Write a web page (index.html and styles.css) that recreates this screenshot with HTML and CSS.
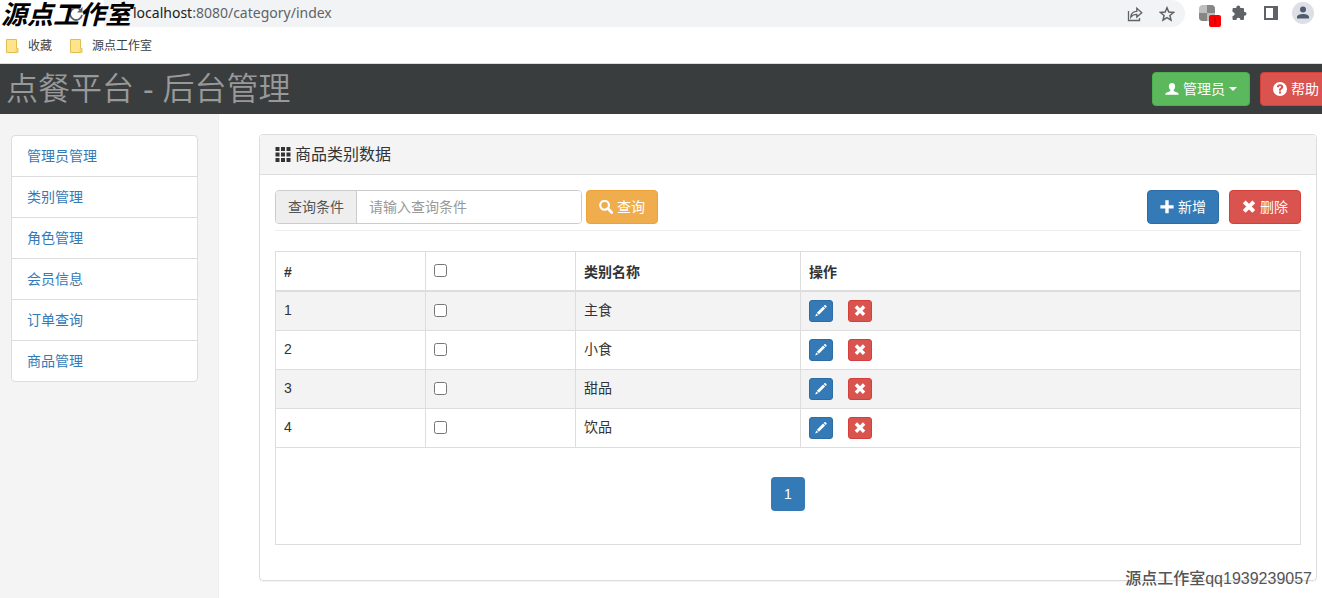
FILE: index.html
```html
<!DOCTYPE html>
<html lang="zh-CN">
<head>
<meta charset="utf-8">
<meta name="viewport" content="width=device-width, initial-scale=1">
<title>点餐平台 - 后台管理</title>
<link rel="stylesheet" href="styles.css">
</head>
<body>
<svg class="sprite" aria-hidden="true">
  <symbol id="i-user" viewBox="0 0 16 14"><path d="M8 0C10.300 0 11.700 1.700 11.600 4C11.500 5.700 10.900 7.200 9.900 8C9.700 8.800 9.900 9.400 10.500 9.700L14.500 11.300C15.300 11.600 15.600 12.200 15.600 13.500H.4C.4 12.200 .7 11.600 1.500 11.300L5.500 9.700C6.100 9.400 6.300 8.800 6.100 8C5.100 7.200 4.500 5.700 4.400 4C4.300 1.700 5.700 0 8 0Z"/></symbol>
  <symbol id="i-help" viewBox="0 0 14 14"><path fill-rule="evenodd" d="M7 0a7 7 0 1 1 0 14A7 7 0 0 1 7 0ZM6 9.600v2h2.100v-2ZM3.900 5.300h2.200c0-.8.300-1.200 1-1.200.6 0 .9.300.9.800 0 .5-.3.800-.9 1.200C6.300 6.700 6 7.300 6 8.800h2c0-.8.200-1.100.9-1.600.9-.6 1.300-1.300 1.300-2.400 0-1.600-1.200-2.600-3.100-2.600S3.900 3.400 3.900 5.300Z"/></symbol>
  <symbol id="i-grid" viewBox="0 0 16 16"><path d="M.5 0h4v4h-4zM6 0h4v4H6zM11.500 0h4v4h-4zM.5 5.500h4v4h-4zM6 5.500h4v4H6zM11.500 5.500h4v4h-4zM.5 11h4v4h-4zM6 11h4v4H6zM11.500 11h4v4h-4z"/></symbol>
  <symbol id="i-search" viewBox="0 0 14 14"><circle cx="5.600" cy="5.300" r="4.400" fill="none" stroke="currentColor" stroke-width="2.200"/><path d="M8.900 8.600l3.800 3.800" stroke="currentColor" stroke-width="2.800" stroke-linecap="round"/></symbol>
  <symbol id="i-plus" viewBox="0 0 14 14"><path d="M5.300.3h3.400v4.900h4.900v3.200H8.700v4.900H5.300V8.400H.4V5.200h4.900z"/></symbol>
  <symbol id="i-remove" viewBox="0 0 14 14"><path d="M3.600.4L7 3.800 10.400.4l2.800 2.800-3.400 3.400 3.400 3.400-2.800 2.800L7 9.400l-3.400 3.400L.8 10l3.400-3.400L.8 3.200z"/></symbol>
  <symbol id="i-pencil" viewBox="0 0 14 14"><path d="M.2 13.400l1.300-3.600 2.300 2.300zM2.200 9.100l7.300-7.300 2.300 2.300-7.300 7.300zM10.200 1.100l.8-.8c.4-.4.900-.4 1.300 0l1 1c.4.400.4.900 0 1.300l-.8.800z"/></symbol>
  <symbol id="i-folder" viewBox="0 0 13 14"><path d="M.5.500h10v9h1.500v4H.5z" fill="#ffe48a" stroke="#dfbf55"/><path d="M9.500 13.500v-3.500h2v3.500z" fill="#f6d365"/></symbol>
</svg>

<div class="browser">
  <div class="toolbar">
    <div class="address">
      <svg class="reload" viewBox="0 0 16 16" aria-hidden="true"><path class="outline" d="M13 4.500A6 6 0 1 0 14 9" stroke-width="1.800"/><path d="M14.500 1v5.500H9z"/></svg>
      <span class="url"><span class="host">localhost</span>:8080/category/index</span>
      <button class="tool" aria-label="分享"><svg class="outline" viewBox="0 0 16 16" stroke-width="1.300"><path d="M1.500 5v9.500h11V12M3.800 11c.3-3.800 2.500-5.600 6-5.700V2.300l5 4.500-5 4.300V8.300C7.300 8.300 5.300 9 3.800 11z"/></svg></button>
      <button class="tool" aria-label="加入收藏"><svg class="outline" viewBox="0 0 16 16" stroke-width="1.500"><path d="M8 1.800l1.800 4.300 4.700.4-3.600 3 1.100 4.600L8 11.700l-4 2.400 1.100-4.600-3.600-3 4.700-.4z"/></svg></button>
    </div>
    <div class="extensions">
      <button class="tool tool-wide" aria-label="扩展程序"><svg viewBox="0 0 24 24"><clipPath id="tile"><rect x="1" y="2" width="16" height="16" rx="4"/></clipPath><g clip-path="url(#tile)"><path fill="#bfbfbf" d="M1 2h16v16H1z"/><path fill="#868686" d="M9 2h8v8H9zM1 10h8v8H1z"/></g><rect x="11" y="12" width="12" height="12" rx="2" fill="#f00"/><path d="M17 14v5M17 20v1.500" stroke="#a00" stroke-width="1.200"/></svg></button>
      <button class="tool" aria-label="管理扩展"><svg viewBox="0 0 16 16"><path d="M1.500 4.200c0-.8.500-1.200 1.200-1.200h2.600c-.3-3.500 4.200-3.500 4 0h2.500c.8 0 1.200.5 1.200 1.200v2.600c3.300-.2 3.300 4.200 0 4v3c0 .8-.5 1.200-1.200 1.200H9.400c.1-3-4-3-4 0H2.700c-.7 0-1.200-.4-1.200-1.200v-2.900c2.900.1 2.900-4 0-4z"/></svg></button>
      <button class="tool" aria-label="侧边栏"><svg viewBox="0 0 16 16"><path fill-rule="evenodd" d="M1 1h14v14H1zM3 3v10h7V3z"/></svg></button>
      <button class="avatar" aria-label="用户"><svg viewBox="0 0 22 22"><circle cx="11" cy="11" r="11" fill="#dcdfe5"/><circle cx="11" cy="7.500" r="3" fill="#4f5b70"/><path d="M5 16.500v-1.500c0-4 12-4 12 0v1.500z" fill="#4f5b70"/></svg></button>
    </div>
  </div>
  <nav class="bookmarks">
    <a href="#"><svg><use href="#i-folder"/></svg>收藏</a>
    <a href="#"><svg><use href="#i-folder"/></svg>源点工作室</a>
  </nav>
</div>

<header class="topbar">
  <h1>点餐平台 - 后台管理</h1>
  <div class="topbar-actions">
    <button class="btn btn-success"><svg class="icon"><use href="#i-user"/></svg>管理员<span class="caret"></span></button>
    <button class="btn btn-danger"><svg class="icon"><use href="#i-help"/></svg>帮助</button>
  </div>
</header>

<div class="layout">
  <aside class="sidebar">
    <nav class="list-group">
      <a href="#">管理员管理</a>
      <a href="#">类别管理</a>
      <a href="#">角色管理</a>
      <a href="#">会员信息</a>
      <a href="#">订单查询</a>
      <a href="#">商品管理</a>
    </nav>
  </aside>
  <main class="content">
    <section class="panel">
      <h2 class="panel-heading"><svg class="icon icon-grid"><use href="#i-grid"/></svg>商品类别数据</h2>
      <div class="panel-body">
        <form class="filter" onsubmit="return false">
          <div class="input-group">
            <label for="keyword">查询条件</label>
            <input id="keyword" type="text" placeholder="请输入查询条件">
          </div>
          <button class="btn btn-warning"><svg class="icon"><use href="#i-search"/></svg>查询</button>
          <div class="filter-actions">
            <button type="button" class="btn btn-primary"><svg class="icon"><use href="#i-plus"/></svg>新增</button>
            <button type="button" class="btn btn-danger"><svg class="icon"><use href="#i-remove"/></svg>删除</button>
          </div>
        </form>
        <table class="table">
          <colgroup><col class="col-id"><col class="col-check"><col class="col-name"><col></colgroup>
          <thead>
            <tr><th>#</th><th><input type="checkbox" aria-label="全选"></th><th>类别名称</th><th>操作</th></tr>
          </thead>
          <tbody>
            <tr><td>1</td><td><input type="checkbox" aria-label="选择主食"></td><td>主食</td><td><div class="row-actions"><button class="btn-xs btn-primary" aria-label="编辑"><svg><use href="#i-pencil"/></svg></button><button class="btn-xs btn-danger" aria-label="删除"><svg><use href="#i-remove"/></svg></button></div></td></tr>
            <tr><td>2</td><td><input type="checkbox" aria-label="选择小食"></td><td>小食</td><td><div class="row-actions"><button class="btn-xs btn-primary" aria-label="编辑"><svg><use href="#i-pencil"/></svg></button><button class="btn-xs btn-danger" aria-label="删除"><svg><use href="#i-remove"/></svg></button></div></td></tr>
            <tr><td>3</td><td><input type="checkbox" aria-label="选择甜品"></td><td>甜品</td><td><div class="row-actions"><button class="btn-xs btn-primary" aria-label="编辑"><svg><use href="#i-pencil"/></svg></button><button class="btn-xs btn-danger" aria-label="删除"><svg><use href="#i-remove"/></svg></button></div></td></tr>
            <tr><td>4</td><td><input type="checkbox" aria-label="选择饮品"></td><td>饮品</td><td><div class="row-actions"><button class="btn-xs btn-primary" aria-label="编辑"><svg><use href="#i-pencil"/></svg></button><button class="btn-xs btn-danger" aria-label="删除"><svg><use href="#i-remove"/></svg></button></div></td></tr>
          </tbody>
          <tfoot>
            <tr><td colspan="4"><div class="pagination"><a href="#">1</a></div></td></tr>
          </tfoot>
        </table>
      </div>
    </section>
  </main>
</div>

<div class="watermark watermark-top">源点工作室</div>
<div class="watermark watermark-bottom">源点工作室qq1939239057</div>
</body>
</html>
```
FILE: styles.css
```css
* { box-sizing: border-box; }

body {
  margin: 0;
  min-height: 100vh;
  display: flex;
  flex-direction: column;
  position: relative;
  overflow-x: hidden;
  background: #fff;
  color: #333;
  font: 14px/20px "Liberation Sans", "Noto Sans CJK SC", sans-serif;
}

a { color: #337ab7; text-decoration: none; }
button { font: inherit; cursor: pointer; }
svg { fill: currentColor; flex: none; }
.sprite { position: absolute; width: 0; height: 0; }
.outline { fill: none; stroke: currentColor; }

/* Browser chrome */
.browser { border-bottom: 1px solid #dadce0; color: #5f6368; }

.toolbar { display: flex; align-items: flex-start; height: 27px; }

.address {
  flex: 1;
  display: flex;
  align-items: center;
  height: 27px;
  margin-left: 104px;
  padding-right: 10px;
  gap: 16px;
  background: #f1f3f4;
  border-radius: 0 14px 14px 0;
}

.reload { width: 16px; height: 16px; margin-left: -36px; }

.url {
  flex: 1;
  margin-left: 33px;
  padding-bottom: 2px;
  font: 14px/20px "Noto Sans", sans-serif;
}

.host { color: #202124; }

.tool {
  width: 16px;
  height: 16px;
  padding: 0;
  border: 0;
  background: none;
  color: inherit;
}

.tool svg, .avatar svg { display: block; width: 100%; height: 100%; }
.tool-wide { width: 24px; height: 24px; margin-top: 4px; }

.extensions {
  display: flex;
  align-items: center;
  height: 26px;
  gap: 16px;
  padding: 0 8px 0 13px;
}

.tool-wide + .tool { margin-left: -7px; }

.avatar {
  width: 22px;
  height: 22px;
  margin-left: -3px;
  padding: 0;
  border: 0;
  background: none;
}

.bookmarks {
  display: flex;
  gap: 18px;
  height: 36px;
  padding: 1px 0 0 6px;
}

.bookmarks a {
  display: flex;
  align-items: center;
  gap: 9px;
  color: #3c4043;
  font-size: 12px;
}

.bookmarks svg { width: 13px; height: 14px; }

/* Site header */
.topbar {
  display: flex;
  justify-content: space-between;
  align-items: center;
  height: 50px;
  padding-left: 6px;
  background: #393d3e;
}

.topbar h1 {
  margin: 0;
  color: #999;
  font-family: "Liberation Sans", "Noto Sans CJK SC DemiLight", "Noto Sans CJK SC", sans-serif;
  font-size: 32px;
  font-weight: 350;
  line-height: 48px;
}

.topbar-actions { display: flex; gap: 10px; margin-right: -10px; }

/* Buttons */
.btn {
  display: inline-flex;
  align-items: center;
  gap: 4px;
  height: 34px;
  padding: 0 12px;
  border: 1px solid;
  border-radius: 4px;
  color: #fff;
  white-space: nowrap;
}

.icon { width: 14px; height: 14px; }
.icon-grid { width: 16px; height: 16px; }

.caret {
  border: 4px solid transparent;
  border-top-color: currentColor;
  border-bottom: 0;
}

.btn-success { background: #5cb85c; border-color: #4cae4c; }
.btn-danger { background: #d9534f; border-color: #d43f3a; }
.btn-warning { background: #f0ad4e; border-color: #eea236; }
.btn-primary { background: #337ab7; border-color: #2e6da4; }

.btn-xs {
  display: flex;
  align-items: center;
  justify-content: center;
  width: 24px;
  height: 22px;
  padding: 0;
  border-width: 1px;
  border-style: solid;
  border-radius: 3px;
  color: #fff;
}

.btn-xs svg { width: 12px; height: 12px; }

/* Page layout */
.layout { flex: 1; display: flex; }

.sidebar {
  flex: 0 0 219px;
  padding: 21px 20px 0 11px;
  background: #f4f4f4;
  border-right: 1px solid #eee;
}

.list-group {
  background: #fff;
  border: 1px solid #ddd;
  border-radius: 4px;
}

.list-group a { display: block; padding: 10px 15px; }
.list-group a + a { border-top: 1px solid #ddd; }

.content { flex: 1; min-width: 0; padding: 20px 5px 17px 40px; }

.panel {
  border: 1px solid #ddd;
  border-radius: 4px;
  box-shadow: 0 1px 1px rgba(0, 0, 0, .05);
}

.panel-heading {
  display: flex;
  align-items: center;
  gap: 4px;
  height: 40px;
  margin: 0;
  padding: 0 15px;
  background: #f4f4f4;
  border-bottom: 1px solid #ddd;
  border-radius: 3px 3px 0 0;
  font-size: 16px;
  font-weight: 400;
}

.panel-body { padding: 15px 15px 35px; }

.filter {
  display: flex;
  gap: 4px;
  padding-bottom: 6px;
  border-bottom: 1px solid #eee;
}

.filter-actions { display: flex; gap: 10px; margin-left: auto; }

.input-group {
  display: flex;
  width: 307px;
  height: 34px;
  border: 1px solid #ccc;
  border-radius: 4px;
  overflow: hidden;
}

.input-group label {
  padding: 6px 12px;
  background: #eee;
  border-right: 1px solid #ccc;
  color: #555;
  white-space: nowrap;
}

.input-group input {
  flex: 1;
  min-width: 0;
  padding: 0 12px;
  border: 0;
  outline: 0;
  color: #555;
  font: inherit;
}

.input-group input::placeholder { color: #999; }

/* Data table */
.table {
  width: 100%;
  margin-top: 20px;
  border-collapse: collapse;
  table-layout: fixed;
}

.col-id, .col-check { width: 150px; }
.col-name { width: 225px; }

.table th, .table td {
  height: 39px;
  padding: 8px;
  border: 1px solid #ddd;
  text-align: left;
  vertical-align: top;
}

.table th { padding: 10px 8px 7px; border-bottom-width: 2px; font-weight: 700; }
.table tbody tr:nth-child(odd) { background: #f3f3f3; }

.table input {
  display: block;
  width: 13px;
  height: 13px;
  margin: 4px 0 0;
}

.table th input { margin-top: 2px; }

.row-actions { display: flex; gap: 15px; }

.pagination {
  display: flex;
  justify-content: center;
  margin: 21px 0 25px;
}

.pagination a {
  padding: 7px 13px;
  background: #337ab7;
  border-radius: 4px;
  color: #fff;
}

/* Overlaid marks */
.watermark { position: absolute; pointer-events: none; white-space: nowrap; }

.watermark-top {
  top: 0;
  left: 1px;
  color: #000;
  font-size: 26px;
  font-style: italic;
  font-weight: 700;
  line-height: 30px;
}

.watermark-bottom {
  right: 10px;
  bottom: 9px;
  color: #555;
  font-size: 16px;
  font-weight: 500;
}
```
